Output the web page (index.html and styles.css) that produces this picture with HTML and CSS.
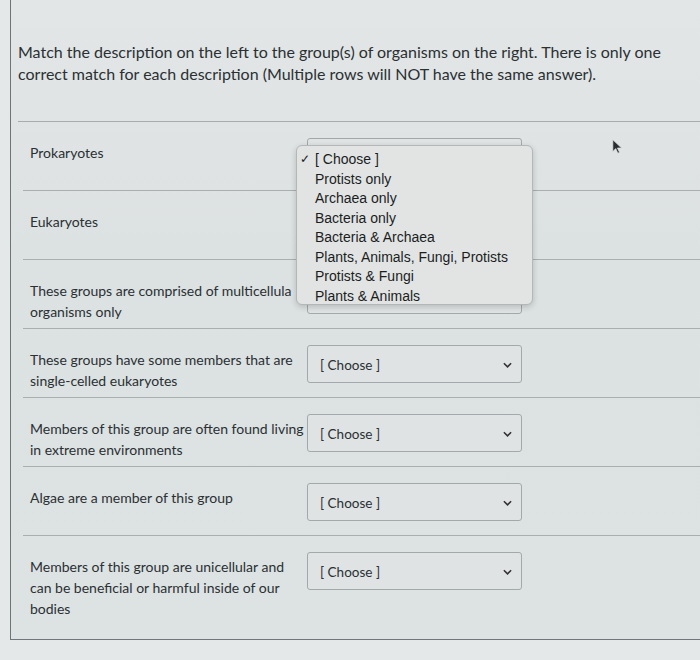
FILE: index.html
```html
<!DOCTYPE html>
<html>
<head>
<meta charset="utf-8">
<link rel="stylesheet" href="styles.css">
</head>
<body>
<div class="frame">
  <p class="intro">Match the description on the left to the group(s) of organisms on the right. There is only one correct match for each description (Multiple rows will NOT have the same answer).</p>
  <div class="rows">
    <div class="row">
      <div class="label">Prokaryotes</div>
      <div class="field">
        <div class="select"><span>[ Choose ]</span><svg class="chev" viewBox="0 0 10 6" width="9" height="6"><path d="M1 1l4 4 4-4" fill="none" stroke="#333" stroke-width="1.8"/></svg></div>
        <ul class="popup">
          <li><span class="check">✓</span>[ Choose ]</li>
          <li>Protists only</li>
          <li>Archaea only</li>
          <li>Bacteria only</li>
          <li>Bacteria &amp; Archaea</li>
          <li>Plants, Animals, Fungi, Protists</li>
          <li>Protists &amp; Fungi</li>
          <li>Plants &amp; Animals</li>
        </ul>
      </div>
    </div>
    <div class="row">
      <div class="label">Eukaryotes</div>
      <div class="field">
        <div class="select"><span>[ Choose ]</span></div>
      </div>
    </div>
    <div class="row">
      <div class="label">These groups are comprised of multicellula<br>organisms only</div>
      <div class="field">
        <div class="select"><span>[ Choose ]</span></div>
      </div>
    </div>
    <div class="row">
      <div class="label">These groups have some members that are single-celled eukaryotes</div>
      <div class="field">
        <div class="select"><span>[ Choose ]</span><svg class="chev" viewBox="0 0 10 6" width="9" height="6"><path d="M1 1l4 4 4-4" fill="none" stroke="#333" stroke-width="1.8"/></svg></div>
      </div>
    </div>
    <div class="row">
      <div class="label">Members of this group are often found living in extreme environments</div>
      <div class="field">
        <div class="select"><span>[ Choose ]</span><svg class="chev" viewBox="0 0 10 6" width="9" height="6"><path d="M1 1l4 4 4-4" fill="none" stroke="#333" stroke-width="1.8"/></svg></div>
      </div>
    </div>
    <div class="row">
      <div class="label">Algae are a member of this group</div>
      <div class="field">
        <div class="select"><span>[ Choose ]</span><svg class="chev" viewBox="0 0 10 6" width="9" height="6"><path d="M1 1l4 4 4-4" fill="none" stroke="#333" stroke-width="1.8"/></svg></div>
      </div>
    </div>
    <div class="row last">
      <div class="label">Members of this group are unicellular and can be beneficial or harmful inside of our bodies</div>
      <div class="field">
        <div class="select"><span>[ Choose ]</span><svg class="chev" viewBox="0 0 10 6" width="9" height="6"><path d="M1 1l4 4 4-4" fill="none" stroke="#333" stroke-width="1.8"/></svg></div>
      </div>
    </div>
  </div>
  <svg class="cursor" viewBox="0 0 12 18" width="10" height="15"><path d="M1 1v14l3.5-3.5 2.5 5.5 2-1-2.5-5.2h5z" fill="#2a2e30" stroke="#e0e4e4" stroke-width="0.8"/></svg>
</div>
</body>
</html>
```
FILE: styles.css
```css
html, body {
  margin: 0;
  padding: 0;
}
body {
  background: #e4e8e9;
  width: 700px;
  height: 660px;
  overflow: hidden;
  font-family: Lato, "Open Sans", sans-serif;
  color: #2a3034;
}
.frame {
  position: relative;
  margin-left: 10px;
  height: 640px;
  box-sizing: border-box;
  border-left: 1px solid #6f7476;
  border-bottom: 1px solid #70777a;
  background: linear-gradient(#e3e6e6, #dce1e1 40%, #dde2e2);
}
.intro {
  margin: 0 0 0 7px;
  padding: 41px 20px 0 0;
  height: 122px;
  box-sizing: border-box;
  font-size: 16px;
  line-height: 22px;
  border-bottom: 1px solid #a7acad;
}
.row {
  display: flex;
  height: 69px;
  box-sizing: border-box;
  border-bottom: 1px solid #a9aeaf;
  margin-left: 12px;
}
.row.last {
  border-bottom: none;
  height: 103px;
}
.label {
  width: 276px;
  padding: 20px 0 0 7px;
  font-size: 14px;
  line-height: 21px;
}
.field {
  position: relative;
  padding: 16px 0 0 1px;
}
.select {
  width: 215px;
  height: 38px;
  box-sizing: border-box;
  border: 1px solid #a3a9ab;
  border-radius: 3px;
  background: #dfe3e3;
  display: flex;
  align-items: center;
  justify-content: space-between;
  padding: 2px 9px 0 12px;
  font-size: 13.5px;
}
.chev {
  display: block;
}
.popup {
  position: absolute;
  z-index: 5;
  left: -10px;
  top: 23px;
  width: 237px;
  height: 160px;
  box-sizing: border-box;
  margin: 0;
  padding: 4px 0 0 0;
  list-style: none;
  background: #e2e4e4;
  border: 1px solid #b3b7b8;
  border-radius: 6px;
  box-shadow: 0 2px 6px rgba(0, 0, 0, 0.18);
  font-family: "Liberation Sans", Arial, sans-serif;
  font-size: 14px;
  color: #1b1d1e;
}
.popup li {
  position: relative;
  height: 19.5px;
  line-height: 19.5px;
  padding-left: 18px;
}
.check {
  position: absolute;
  left: 3px;
  font-size: 12px;
}
.cursor {
  position: absolute;
  left: 601px;
  top: 139px;
}
```
